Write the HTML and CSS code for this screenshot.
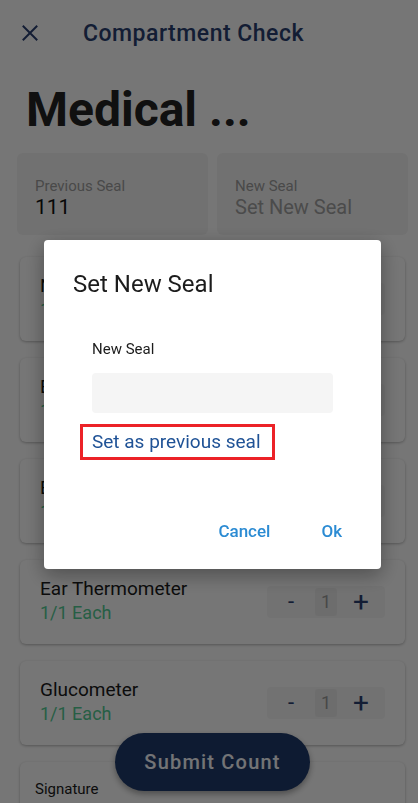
FILE: index.html
```html
<!DOCTYPE html>
<html lang="en">
<head>
<meta charset="utf-8">
<title>Compartment Check</title>
<link rel="stylesheet" href="styles.css">
</head>
<body>
<div class="page">
  <header class="topbar">
    <svg class="close-icon" viewBox="0 0 16 16" width="16" height="16" aria-hidden="true">
      <path d="M1.5 1.5 L14.5 14.5 M14.5 1.5 L1.5 14.5" stroke="currentColor" stroke-width="2" stroke-linecap="square" fill="none"/>
    </svg>
    <span class="topbar-title">Compartment Check</span>
  </header>

  <h1 class="heading">Medical ...</h1>

  <div class="seal-row">
    <div class="seal-card">
      <div class="seal-label">Previous Seal</div>
      <div class="seal-value">111</div>
    </div>
    <div class="seal-card">
      <div class="seal-label">New Seal</div>
      <div class="seal-value seal-placeholder">Set New Seal</div>
    </div>
  </div>

  <div class="items">
    <div class="item-card">
      <div class="item-info">
        <div class="item-name">Nasal Cannula</div>
        <div class="item-count">1/1 Each</div>
      </div>
      <div class="stepper">
        <span class="step-btn minus">-</span>
        <span class="step-num">1</span>
        <span class="step-btn plus">+</span>
      </div>
    </div>
    <div class="item-card">
      <div class="item-info">
        <div class="item-name">Epipen</div>
        <div class="item-count">1/1 Each</div>
      </div>
      <div class="stepper">
        <span class="step-btn minus">-</span>
        <span class="step-num">1</span>
        <span class="step-btn plus">+</span>
      </div>
    </div>
    <div class="item-card">
      <div class="item-info">
        <div class="item-name">Elastic Bandage</div>
        <div class="item-count">1/1 Each</div>
      </div>
      <div class="stepper">
        <span class="step-btn minus">-</span>
        <span class="step-num">1</span>
        <span class="step-btn plus">+</span>
      </div>
    </div>
    <div class="item-card">
      <div class="item-info">
        <div class="item-name">Ear Thermometer</div>
        <div class="item-count">1/1 Each</div>
      </div>
      <div class="stepper">
        <span class="step-btn minus">-</span>
        <span class="step-num">1</span>
        <span class="step-btn plus">+</span>
      </div>
    </div>
    <div class="item-card">
      <div class="item-info">
        <div class="item-name">Glucometer</div>
        <div class="item-count">1/1 Each</div>
      </div>
      <div class="stepper">
        <span class="step-btn minus">-</span>
        <span class="step-num">1</span>
        <span class="step-btn plus">+</span>
      </div>
    </div>
    <div class="signature-card">
      <div class="signature-label">Signature</div>
    </div>
  </div>

  <button class="submit-btn">Submit Count</button>
</div>

<div class="overlay">
  <div class="dialog">
    <div class="dialog-title">Set New Seal</div>
    <div class="dialog-body">
      <div class="field-label">New Seal</div>
      <div class="field-input"></div>
      <div class="link-box"><span class="link">Set as previous seal</span></div>
    </div>
    <div class="dialog-actions">
      <span class="action">Cancel</span>
      <span class="action">Ok</span>
    </div>
  </div>
</div>
</body>
</html>
```

FILE: styles.css
```css
* { box-sizing: border-box; }
html, body {
  margin: 0;
  padding: 0;
}
body {
  width: 418px;
  height: 803px;
  overflow: hidden;
  background: #fbfbfb;
  font-family: Roboto, "Noto Sans", "Liberation Sans", sans-serif;
  color: #222;
}
.page {
  position: relative;
  height: 803px;
  overflow: hidden;
}
.topbar {
  height: 66px;
  display: flex;
  align-items: center;
  padding-left: 22px;
  color: #2a3f70;
}
.close-icon {
  display: block;
}
.topbar-title {
  margin-left: 45px;
  font-size: 23px;
  font-weight: 500;
  color: #2a3f70;
  letter-spacing: 0.5px;
}
.heading {
  margin: 14px 0 0 26px;
  font-size: 48px;
  font-weight: 700;
  line-height: 60px;
  color: #222;
}
.seal-row {
  display: flex;
  gap: 9px;
  margin: 13px 10px 0 17px;
}
.seal-card {
  flex: 1;
  height: 82px;
  background: #f0f0f0;
  border-radius: 6px;
  padding: 24px 18px 0;
}
.seal-label {
  font-size: 15px;
  line-height: 18px;
  color: #9c9c9c;
}
.seal-value {
  font-size: 21px;
  line-height: 24px;
  color: #111;
}
.seal-placeholder {
  font-size: 20px;
  color: #a0a0a0;
}
.items {
  margin: 22px 13px 0 20px;
  display: flex;
  flex-direction: column;
  gap: 17px;
}
.item-card {
  height: 84px;
  background: #fbfbfb;
  border-radius: 6px;
  box-shadow: 0 1px 3px rgba(0,0,0,0.28);
  display: flex;
  align-items: center;
  justify-content: space-between;
  padding: 0 20px;
}
.item-info {
  align-self: flex-start;
  padding-top: 15px;
}
.item-name {
  font-size: 19px;
  line-height: 27px;
  color: #1a1a1a;
}
.item-count {
  font-size: 18px;
  line-height: 22px;
  color: #52c992;
}
.stepper {
  display: flex;
  align-items: center;
  height: 32px;
  background: #f2f2f2;
  border-radius: 4px;
}
.step-btn {
  width: 48px;
  text-align: center;
  color: #2a3f70;
}
.minus {
  font-size: 22px;
  line-height: 32px;
}
.plus {
  font-size: 28px;
  line-height: 32px;
}
.step-num {
  width: 22px;
  height: 28px;
  background: #e8e8e8;
  border-radius: 3px;
  text-align: center;
  font-size: 18px;
  line-height: 28px;
  color: #9a9a9a;
}
.signature-card {
  height: 84px;
  background: #fbfbfb;
  border-radius: 6px;
  box-shadow: 0 1px 3px rgba(0,0,0,0.28);
  padding: 18px 15px 0;
}
.signature-label {
  font-size: 15px;
  line-height: 18px;
  color: #1a1a1a;
}
.submit-btn {
  position: absolute;
  left: 115px;
  top: 733px;
  width: 195px;
  height: 58px;
  border: none;
  border-radius: 29px;
  background: #1f3a6a;
  color: #f4f6fa;
  font-family: Roboto, "Noto Sans", "Liberation Sans", sans-serif;
  font-size: 20px;
  font-weight: 500;
  letter-spacing: 1.2px;
  box-shadow: 0 3px 6px rgba(0,0,0,0.35);
}
.overlay {
  position: fixed;
  inset: 0;
  background: rgba(0,0,0,0.53);
  padding: 240px 0 0 44px;
}
.dialog {
  width: 337px;
  height: 329px;
  background: #ffffff;
  border-radius: 4px;
  box-shadow: 0 6px 20px rgba(0,0,0,0.35);
  padding: 30px 0 0 0;
  display: flex;
  flex-direction: column;
}
.dialog-title {
  margin-left: 29px;
  font-size: 24px;
  line-height: 28px;
  color: #1c1c1c;
}
.dialog-body {
  margin: 42px 0 0 48px;
  width: 241px;
}
.field-label {
  font-size: 15px;
  line-height: 18px;
  color: #1c1c1c;
}
.field-input {
  margin-top: 15px;
  height: 40px;
  background: #f5f5f5;
  border-radius: 4px;
}
.link-box {
  display: inline-block;
  margin: 11px 0 0 -12px;
  border: 3px solid #ec2227;
  padding: 4px 11px 4px 9px;
  white-space: nowrap;
}
.link {
  display: block;
  font-size: 19px;
  line-height: 22px;
  color: #1f5296;
}
.dialog-actions {
  display: flex;
  justify-content: flex-end;
  gap: 51px;
  padding-right: 39px;
  margin-top: 61px;
}
.action {
  font-size: 17px;
  line-height: 20px;
  font-weight: 500;
  color: #2b8bd3;
}
```
